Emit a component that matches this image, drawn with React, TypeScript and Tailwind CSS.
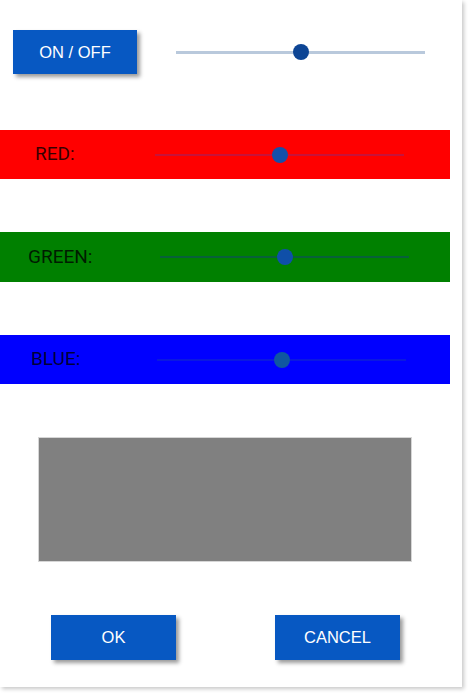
import type { ReactNode } from "react"

interface SliderProps {
  value: number
  width: string
  track: string
  thumb: string
  thick?: boolean
}

function Slider({ value, width, track, thumb, thick }: SliderProps) {
  return (
    <div className={`relative flex h-4 items-center ${width}`}>
      <div className={`w-full ${thick ? "h-[3px]" : "h-[2px]"} ${track}`} />
      <div
        className={`absolute h-4 w-4 -translate-x-1/2 rounded-full ${thumb}`}
        style={{ left: `${value}%` }}
      />
    </div>
  )
}

function ActionButton({ children, className }: { children: ReactNode; className: string }) {
  return (
    <button
      type="button"
      className={`flex items-center justify-center bg-[#0758c2] font-['Liberation_Sans',Arial,sans-serif] text-[16.5px] text-white shadow-[3px_3px_4px_rgba(0,0,0,0.4)] ${className}`}
    >
      {children}
    </button>
  )
}

interface ColorBarProps {
  label: string
  bg: string
  labelWidth: string
  labelPad: string
  track: string
  thumb: string
  height: string
}

function ColorBar({ label, bg, labelWidth, labelPad, track, thumb, height }: ColorBarProps) {
  return (
    <div className={`flex w-[450px] items-center ${height} ${bg}`}>
      <span
        className={`shrink-0 ${labelWidth} ${labelPad} font-['Roboto',sans-serif] text-[19px] text-black/80`}
      >
        {label}
      </span>
      <Slider value={50} width="w-[249px]" track={track} thumb={thumb} />
    </div>
  )
}

export default function App() {
  return (
    <div className="h-[697px] w-[474px] bg-white">
      <div className="flex h-[687px] w-[462px] flex-col bg-white shadow-[2px_2px_4px_rgba(0,0,0,0.22)]">
        <div className="mt-[30px] flex items-center">
          <ActionButton className="ml-[13px] h-[44px] w-[124px]">ON / OFF</ActionButton>
          <Slider
            value={50}
            width="ml-[39px] w-[249px]"
            track="bg-[#b9c9dc]"
            thumb="bg-[#0d4595]"
            thick
          />
        </div>

        <div className="mt-[56px]">
          <ColorBar
            label="RED:"
            bg="bg-[#ff0000]"
            labelWidth="w-[155px]"
            labelPad="pl-[35px]"
            track="bg-[#c8123a]"
            thumb="bg-[#1550aa]"
            height="h-[49px]"
          />
        </div>

        <div className="mt-[53px]">
          <ColorBar
            label="GREEN:"
            bg="bg-[#008000]"
            labelWidth="w-[160px]"
            labelPad="pl-[28px]"
            track="bg-[#08603a]"
            thumb="bg-[#0f4fa8]"
            height="h-[50px]"
          />
        </div>

        <div className="mt-[53px]">
          <ColorBar
            label="BLUE:"
            bg="bg-[#0000ff]"
            labelWidth="w-[157px]"
            labelPad="pl-[31px]"
            track="bg-[#0a18e0]"
            thumb="bg-[#0f57a0]"
            height="h-[49px]"
          />
        </div>

        <div className="ml-[38px] mt-[53px] h-[125px] w-[374px] border border-[#d6d6d6] bg-[#808080]" />

        <div className="mt-[53px] flex">
          <ActionButton className="ml-[51px] h-[45px] w-[125px]">OK</ActionButton>
          <ActionButton className="ml-[99px] h-[45px] w-[125px]">CANCEL</ActionButton>
        </div>
      </div>
    </div>
  )
}
